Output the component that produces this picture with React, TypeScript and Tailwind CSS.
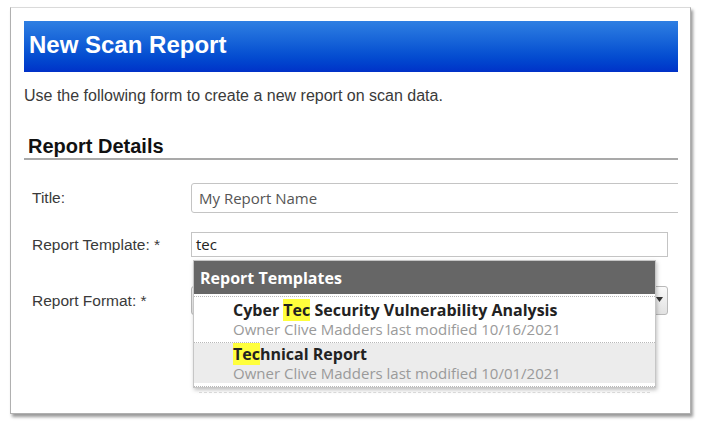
import React from "react"

const sans = { fontFamily: '"Liberation Sans", Arial, sans-serif' }
const ui = { fontFamily: '"Open Sans", "Noto Sans", sans-serif' }

function Hl({ children }: { children: React.ReactNode }) {
  return <span className="bg-[#ffff3c]">{children}</span>
}

function TemplateItem({
  title,
  meta,
  active,
}: {
  title: React.ReactNode
  meta: string
  active?: boolean
}) {
  return (
    <div className="border-t border-dotted border-[#b8b8b8]">
      <div
        className={
          active
            ? "bg-[#ececec] pl-[39px] pt-[2px]"
            : "pl-[39px] pt-[4px] pb-[3px]"
        }
      >
        <div className="text-[16px] font-bold leading-[19px] text-[#222]">{title}</div>
        <div className="text-[15px] leading-[19px] text-[#9a9a9a]">{meta}</div>
      </div>
    </div>
  )
}

export default function App() {
  return (
    <div className="h-[430px] w-[702px] bg-white pl-[10px] pt-[7px]" style={sans}>
      <div className="h-[407px] w-[681px] border border-[#b0b0b0] border-t-[#dadada] bg-white px-[13px] pt-[13px] shadow-[2px_3px_3px_rgba(0,0,0,0.4)]">
        <div className="h-[390px] w-[654px] overflow-hidden">
          {/* Title bar */}
          <div className="flex h-[51px] items-center bg-linear-to-b from-[#2f7fe2] to-[#0131c8] pb-[3px] pl-[5px] text-[24px] font-bold text-white">
            New Scan Report
          </div>

          <p className="mt-[15px] text-[16px] leading-[18px] text-[#3a3a3a]">
            Use the following form to create a new report on scan data.
          </p>

          <h2 className="mt-[30px] border-b-2 border-[#a9a9a9] pl-[4px] text-[20px] font-bold leading-[23px] text-[#111]">
            Report Details
          </h2>

          {/* Form */}
          <div className="mt-[23px] flex items-center">
            <label className="w-[167px] shrink-0 pl-[8px] text-[15.5px] text-[#3a3a3a]">Title:</label>
            <div
              className="flex h-[30px] w-[520px] shrink-0 items-center rounded-[3px] border border-[#c4c4c4] pl-[7px] text-[15px] text-[#555]"
              style={ui}
            >
              My Report Name
            </div>
          </div>

          <div className="relative mt-[19px] flex items-center">
            <label className="w-[167px] shrink-0 pl-[8px] text-[15.5px] text-[#3a3a3a]">Report Template: *</label>
            <div
              className="flex h-[25px] w-[477px] shrink-0 items-center border border-[#c4c4c4] pl-[4px] text-[15px] text-[#222]"
              style={ui}
            >
              tec
            </div>

            {/* Autocomplete dropdown */}
            <div className="absolute left-[169px] top-[28px] z-10 w-[463px]" style={ui}>
              <div className="border border-[#c6c6c6] bg-white shadow-[1px_2px_4px_rgba(0,0,0,0.25)]">
                <div className="flex h-[33px] items-center bg-[#666] pl-[6px] text-[16px] font-bold text-white">
                  Report Templates
                </div>
                <div className="mt-[2px]">
                  <TemplateItem
                    title={
                      <>
                        Cyber <Hl>Tec</Hl> Security Vulnerability Analysis
                      </>
                    }
                    meta="Owner Clive Madders last modified 10/16/2021"
                  />
                  <TemplateItem
                    active
                    title={
                      <>
                        <Hl>Tec</Hl>hnical Report
                      </>
                    }
                    meta="Owner Clive Madders last modified 10/01/2021"
                  />
                  <div className="mt-[3px] border-t border-dotted border-[#b8b8b8]" />
                </div>
              </div>
              <div className="mx-[6px] mt-[4px] border-t border-dashed border-[#d8d8d8]" />
            </div>
          </div>

          <div className="mt-[29px] flex items-center">
            <label className="w-[167px] shrink-0 pl-[8px] text-[15.5px] text-[#3a3a3a]">Report Format: *</label>
            <div className="relative h-[29px] w-[477px] shrink-0 rounded-[3px] border border-[#b9b9b9] bg-linear-to-b from-[#fafafa] to-[#e2e2e2]">
              <svg className="absolute right-[4px] top-[10px]" width="7" height="5" viewBox="0 0 7 5">
                <path d="M0 0h7L3.5 5z" fill="#333" />
              </svg>
            </div>
          </div>
        </div>
      </div>
    </div>
  )
}
